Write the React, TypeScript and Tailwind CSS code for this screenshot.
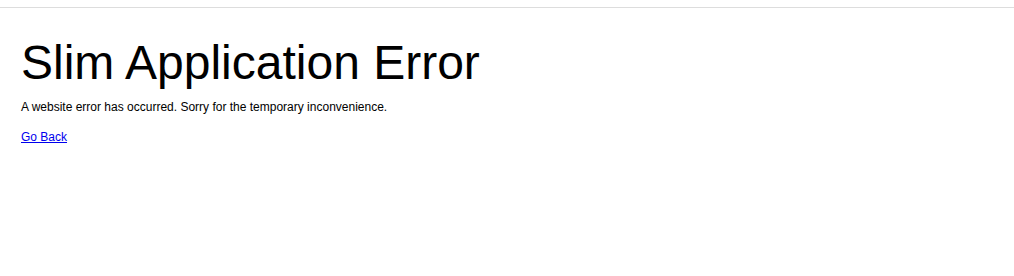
export default function App() {
  return (
    <div className="min-h-[276px] bg-white font-['Liberation_Sans',Arial,sans-serif] text-black">
      <div className="h-[7px]" />
      <div className="h-px w-full bg-[#dddddd]" />
      <div className="px-[21px] pt-[31px]">
        <h1 className="m-0 text-[48px] font-normal leading-[48px]">Slim Application Error</h1>
        <p className="mt-[11px] text-[12px] leading-[18px]">
          A website error has occurred. Sorry for the temporary inconvenience.
        </p>
        <a href="#" className="mt-[12px] block w-fit text-[12px] leading-[18px] text-[#0000ee] underline">
          Go Back
        </a>
      </div>
    </div>
  );
}
